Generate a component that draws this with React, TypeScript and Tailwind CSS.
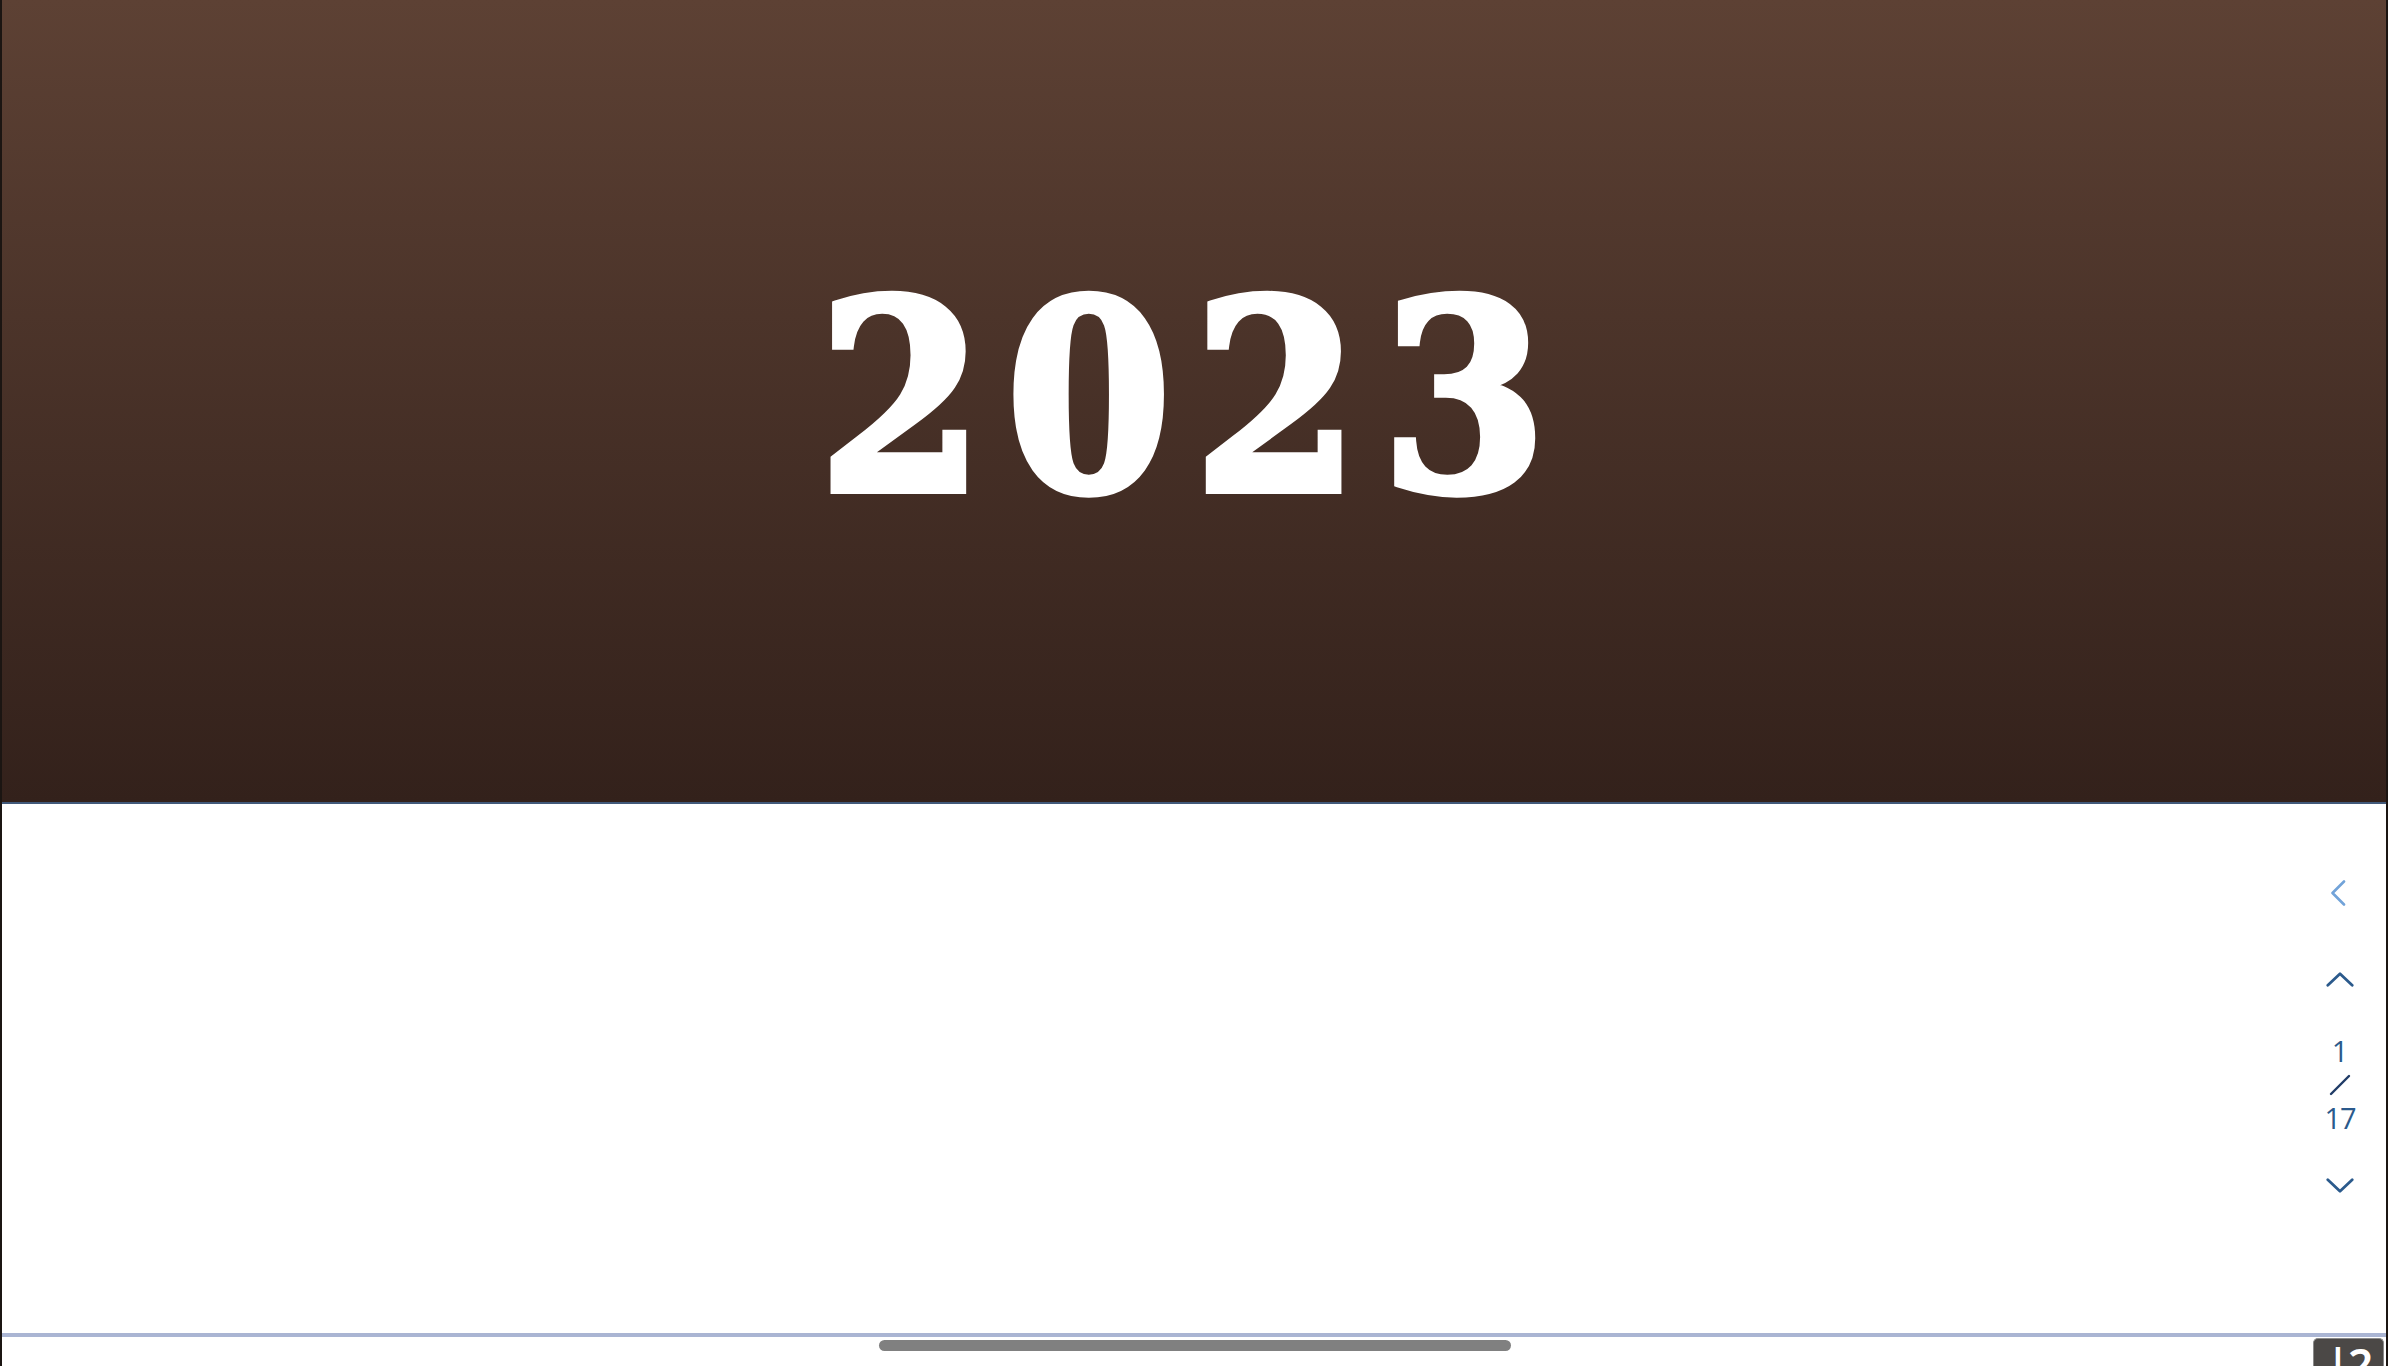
import React from "react";

function Chevron({ dir, className }: { dir: "left" | "up" | "down"; className?: string }) {
  // simple stroked chevrons for the slide pager
  if (dir === "left") {
    return (
      <svg width="16" height="26" viewBox="0 0 16 26" className={className} fill="none">
        <polyline points="14,1.5 2.5,13 14,24.5" stroke="currentColor" strokeWidth="2.6" strokeLinecap="round" strokeLinejoin="round" />
      </svg>
    );
  }
  return (
    <svg width="28" height="15" viewBox="0 0 28 15" className={className} fill="none">
      {dir === "up" ? (
        <polyline points="1.8,13.2 14,1.8 26.2,13.2" stroke="currentColor" strokeWidth="2.8" strokeLinecap="round" strokeLinejoin="round" />
      ) : (
        <polyline points="1.8,1.8 14,13.2 26.2,1.8" stroke="currentColor" strokeWidth="2.8" strokeLinecap="round" strokeLinejoin="round" />
      )}
    </svg>
  );
}

export default function App() {
  return (
    <div className="w-full h-[1366px] flex flex-col overflow-hidden bg-white border-l-2 border-r-2 border-[#1b1512]">
      {/* Title slide header */}
      <header className="h-[802px] shrink-0 flex items-center justify-center bg-gradient-to-b from-[#5d4134] to-[#33211b] pb-[8px]">
        <h1
          className="text-white font-bold text-[263px] leading-none tracking-[23px] font-stretch-condensed [-webkit-text-stroke:8px_white]"
          style={{ fontFamily: '"DejaVu Serif Condensed", "DejaVu Serif", serif' }}
        >
          2023
        </h1>
      </header>
      <div className="h-[2px] shrink-0 bg-[#41597a]" />

      {/* Slide body with pager */}
      <main className="flex-1 flex">
        <div className="flex-1" />
        <nav
          className="w-[92px] flex flex-col items-center pt-[76px] text-[#2b5a8c]"
          style={{ fontFamily: '"Open Sans", "Noto Sans", sans-serif' }}
        >
          <Chevron dir="left" className="text-[#72a3d9] -ml-[4px]" />
          <Chevron dir="up" className="mt-[66px]" />
          <span className="mt-[49px] text-[29px] leading-none">1</span>
          <svg width="24" height="22" viewBox="0 0 24 22" className="mt-[9px] text-[#1f3b66]" fill="none">
            <line x1="3" y1="20" x2="21" y2="2" stroke="currentColor" strokeWidth="2.4" strokeLinecap="round" />
          </svg>
          <span className="mt-[7px] text-[29px] leading-none tracking-[-1px]">17</span>
          <Chevron dir="down" className="mt-[46px]" />
        </nav>
      </main>

      {/* Bottom scroll strip */}
      <div className="h-[4px] shrink-0 bg-[#aab5d3]" />
      <div className="h-[29px] shrink-0 flex items-start">
        <div className="w-[877px]" />
        <div className="mt-[3px] w-[632px] h-[11px] rounded-full bg-[#808080]" />
        <div className="flex-1" />
        <div className="mt-[1px] mr-[2px] w-[71px] h-[28px] rounded-t-[5px] bg-[#4b4846] border border-[#8a8a8a] border-b-0 overflow-hidden flex justify-center">
          <span
            className="text-white text-[44px] leading-none mt-[2px] tracking-[-2px] font-semibold"
            style={{ fontFamily: '"Noto Sans", sans-serif' }}
          >
            |2
          </span>
        </div>
      </div>
    </div>
  );
}
